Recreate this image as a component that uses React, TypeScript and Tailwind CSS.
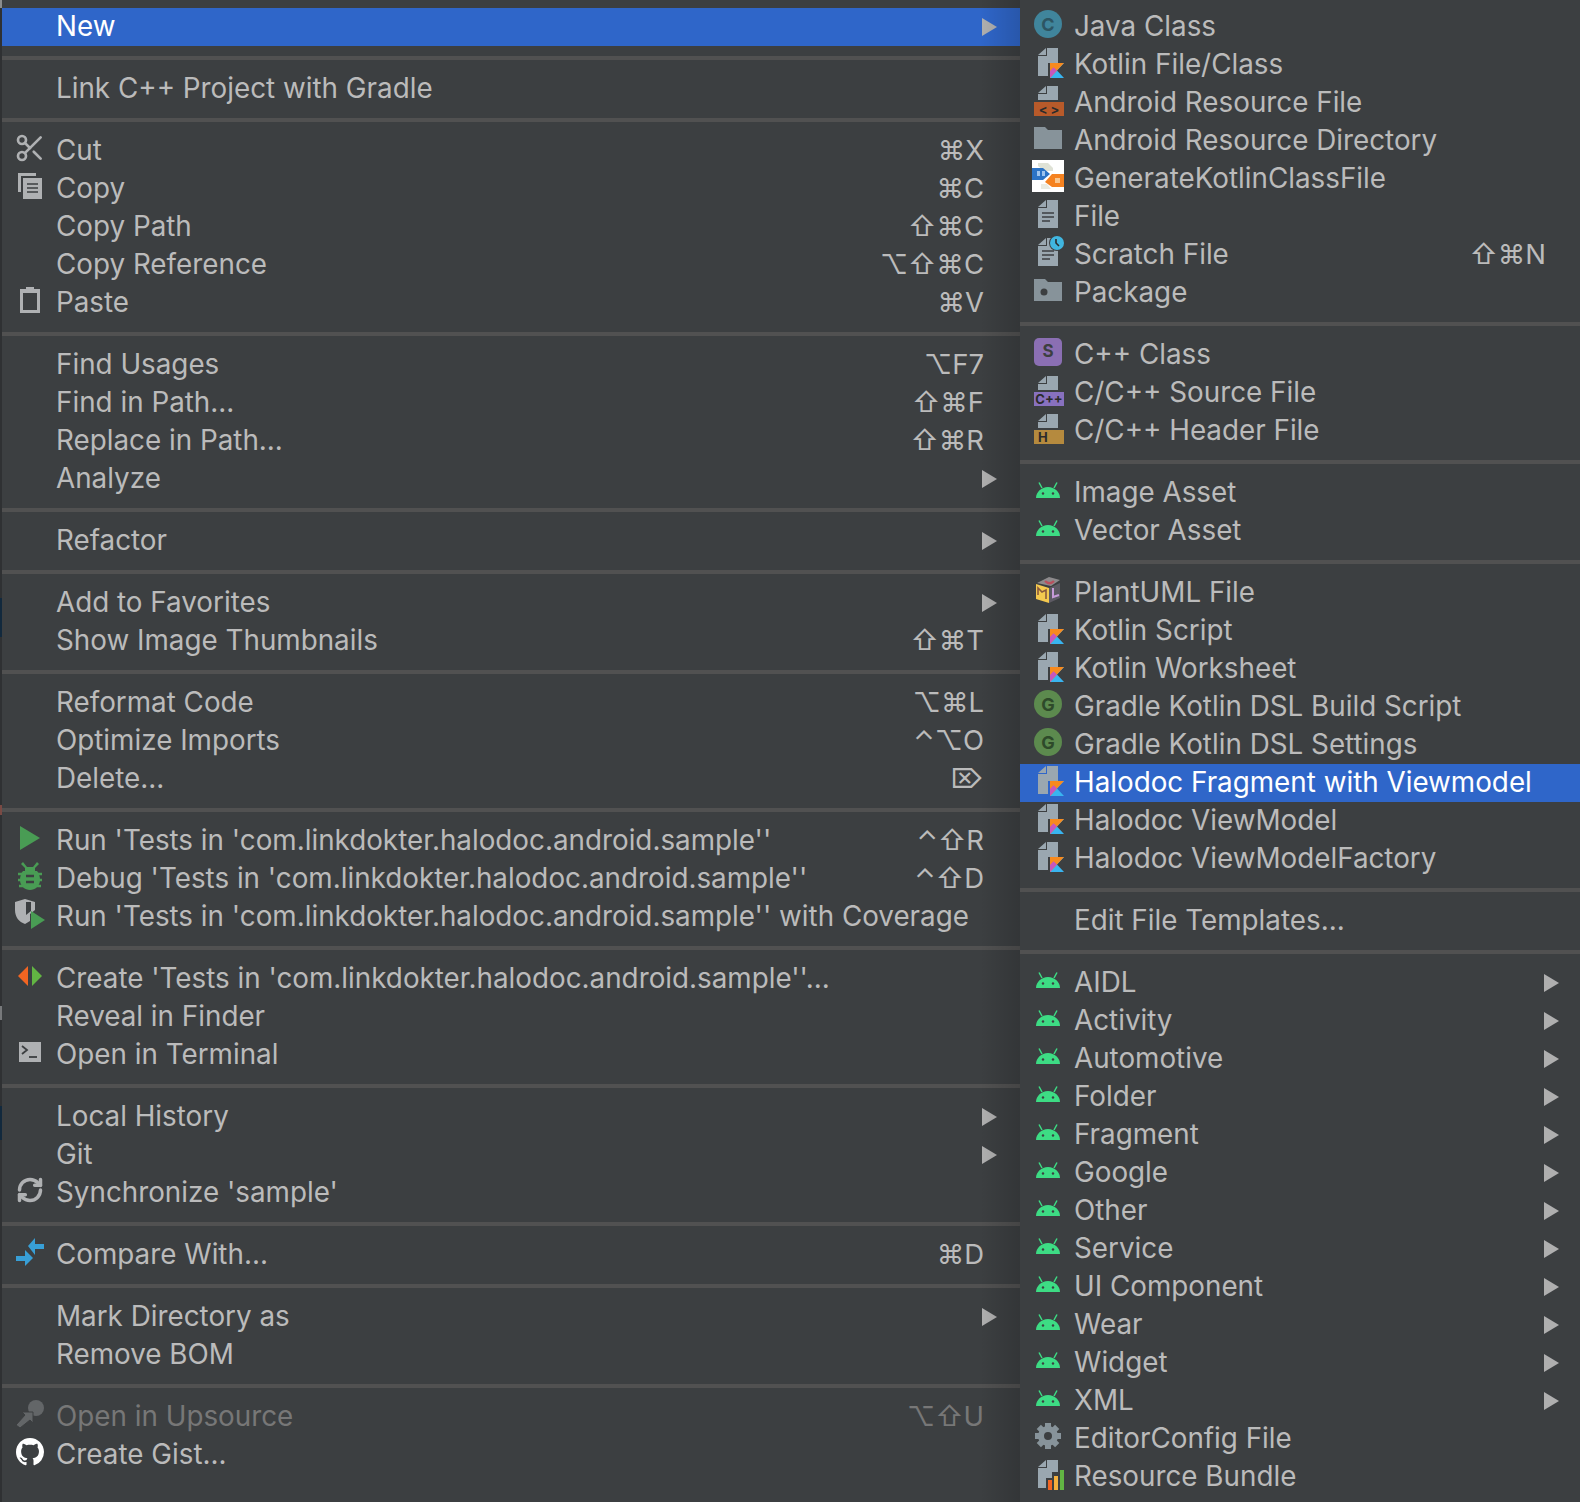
import type { ReactNode } from "react";
import { Scissors, RefreshCw } from "lucide-react";

type Item = {
  label: string;
  icon?: ReactNode;
  keys?: string;
  arrow?: boolean;
  active?: boolean;
  disabled?: boolean;
};

const BaseFile = () => (
  <path d="M6 9 14 2v7H6ZM15 2h11v8H15ZM6 10h20v20H6Z" fill="#9aa7b0" />
);

const KotlinFile = () => (
  <svg width="32" height="32" viewBox="0 0 32 32">
    <path d="M6 9 14 2v7H6ZM15 2h11v15H15ZM6 10h10v20H6Z" fill="#9aa7b0" />
    <path d="M18 17h14l-7 7.500 7 7.500H18Z" fill="#39b4f0" />
    <path d="M18 17h14l-14 15Z" fill="#f88a1e" />
    <path d="M18 32v-7l3.500-3.700 3.500 3.200-7 7.500Z" fill="#c757bc" />
  </svg>
);

const PlainFile = ({ clock }: { clock?: boolean }) => (
  <svg width="32" height="32" viewBox="0 0 32 32">
    <BaseFile />
    <path d="M10 15h12M10 19h12M10 23h8" stroke="#3c3f41" strokeWidth="1.500" />
    {clock && (
      <>
        <circle cx="25" cy="7" r="8" fill="#3c3f41" />
        <circle cx="25" cy="7" r="7" fill="#40b6e0" />
        <path d="M24 3v4l3 3" stroke="#2b2b2b" fill="none" strokeWidth="1.600" />
      </>
    )}
  </svg>
);

const Android = () => (
  <svg width="24" height="16" viewBox="0 0 24 16">
    <path d="M0 16c0-6 5.400-11 12-11s12 5 12 11Z" fill="#3ddc84" />
    <path d="M3 0.500 6 6M21 0.500 18 6" stroke="#3ddc84" strokeWidth="1.500" />
    <circle cx="7" cy="11.500" r="1.200" fill="#3c3f41" />
    <circle cx="17" cy="11.500" r="1.200" fill="#3c3f41" />
  </svg>
);

const Circle = ({ bg, fg, ch }: { bg: string; fg: string; ch: string }) => (
  <span
    className="flex h-[28px] w-[28px] items-center justify-center rounded-full text-[18px] font-bold"
    style={{ background: bg, color: fg }}
  >
    {ch}
  </span>
);

const Tagged = ({ bg, fg, ch }: { bg: string; fg: string; ch: string }) => (
  <svg width="32" height="32" viewBox="0 0 32 32">
    <path d="M6 9 14 2v7H6ZM15 2h11v14H15ZM6 10h20v6H6Z" fill="#9aa7b0" />
    <rect x="2" y="18" width="30" height="14" fill={bg} />
    <text
      x={ch === "H" ? 6 : 17}
      y="30"
      textAnchor={ch === "H" ? "start" : "middle"}
      fontSize="13"
      fontWeight="700"
      fill={fg}
      fontFamily="Inter, sans-serif"
    >
      {ch}
    </text>
  </svg>
);

const GenerateKotlin = () => (
  <svg width="32" height="32" viewBox="0 0 32 32">
    <rect width="32" height="32" fill="#fff" />
    <path d="M6 3h10l5 5v3H12L6 6Z" fill="#dfe2d6" />
    <path d="M0 8h11l7 6-7 6H0Z" fill="#2b73c6" />
    <path d="M13 22l7-8h12v13H20Z" fill="#f58220" />
    <rect x="5" y="11" width="3" height="5" fill="#9cc3ee" />
    <rect x="10" y="11" width="3" height="5" fill="#9cc3ee" />
    <rect x="23" y="18" width="5" height="5" fill="#f9c68e" />
    <path d="M9 24h6l4 5H9Z" fill="#e9ebe2" />
  </svg>
);

const Gear = () => (
  <svg width="26" height="26" viewBox="0 0 26 26" fill="#87939a">
    {[0, 45, 90, 135, 180, 225, 270, 315].map((deg) => (
      <rect key={deg} x="10" y="0" width="6" height="6" transform={`rotate(${deg} 13 13)`} />
    ))}
    <circle cx="13" cy="13" r="7" fill="none" stroke="#87939a" strokeWidth="6" />
  </svg>
);

const left: Item[][] = [
  [{ label: "New", arrow: true, active: true }],
  [{ label: "Link C++ Project with Gradle" }],
  [
    { label: "Cut", keys: "⌘X", icon: <Scissors size={32} color="#afb1b3" strokeWidth={2} /> },
    {
      label: "Copy",
      keys: "⌘C",
      icon: (
        <svg width="24" height="26" viewBox="0 0 24 26">
          <path d="M0 0h18v3H3v16H0Z" fill="#afb1b3" />
          <path d="M5 5h19v21H5Z" fill="#afb1b3" />
          <path d="M9 11h11M9 15h11M9 19h11" stroke="#3c3f41" strokeWidth="1.600" />
        </svg>
      ),
    },
    { label: "Copy Path", keys: "⇧⌘C" },
    { label: "Copy Reference", keys: "⌥⇧⌘C" },
    {
      label: "Paste",
      keys: "⌘V",
      icon: (
        <svg width="20" height="26" viewBox="0 0 20 26">
          <path d="M6 0h8v2h6v24H0V2h6Zm-3 6v17h14V6Z" fill="#afb1b3" fillRule="evenodd" />
        </svg>
      ),
    },
  ],
  [
    { label: "Find Usages", keys: "⌥F7" },
    { label: "Find in Path...", keys: "⇧⌘F" },
    { label: "Replace in Path...", keys: "⇧⌘R" },
    { label: "Analyze", arrow: true },
  ],
  [{ label: "Refactor", arrow: true }],
  [
    { label: "Add to Favorites", arrow: true },
    { label: "Show Image Thumbnails", keys: "⇧⌘T" },
  ],
  [
    { label: "Reformat Code", keys: "⌥⌘L" },
    { label: "Optimize Imports", keys: "⌃⌥O" },
    { label: "Delete...", keys: "⌦" },
  ],
  [
    {
      label: "Run 'Tests in 'com.linkdokter.halodoc.android.sample''",
      keys: "⌃⇧R",
      icon: (
        <svg width="20" height="24" viewBox="0 0 20 24">
          <path d="M0 0 20 12 0 24Z" fill="#499c54" />
        </svg>
      ),
    },
    {
      label: "Debug 'Tests in 'com.linkdokter.halodoc.android.sample''",
      keys: "⌃⇧D",
      icon: (
        <svg width="24" height="28" viewBox="0 0 24 28">
          <path d="M5 0 9 5h6l4-5 2 2-4 4v3H7V6L3 2Z" fill="#499c54" />
          <path d="M5 9h14c2 2 3 6 3 9 0 6-5 10-10 10S2 24 2 18c0-3 1-7 3-9Z" fill="#499c54" />
          <path d="M0 12h24M0 18h24M1 24h22" stroke="#499c54" strokeWidth="2.400" />
          <path d="M8 14h8M8 20h8" stroke="#3c3f41" strokeWidth="2.400" />
        </svg>
      ),
    },
    {
      label: "Run 'Tests in 'com.linkdokter.halodoc.android.sample'' with Coverage",
      icon: (
        <svg width="30" height="30" viewBox="0 0 30 30">
          <path d="M0 3 10 0l10 3v8l-5 4v7l-5 3C4 23 0 18 0 11Z" fill="#afb1b3" />
          <path d="M11 3h5v9l-5 4Z" fill="#3c3f41" />
          <path d="M16 12 30 21 16 30Z" fill="#499c54" />
        </svg>
      ),
    },
  ],
  [
    {
      label: "Create 'Tests in 'com.linkdokter.halodoc.android.sample''...",
      icon: (
        <svg width="24" height="20" viewBox="0 0 24 20">
          <path d="M10 0v20L0 10Z" fill="#f26522" />
          <path d="M14 0v20l10-10Z" fill="#62b543" />
        </svg>
      ),
    },
    { label: "Reveal in Finder" },
    {
      label: "Open in Terminal",
      icon: (
        <svg width="22" height="20" viewBox="0 0 22 20">
          <rect width="22" height="20" fill="#afb1b3" />
          <path d="M3 4l5 4-5 4" fill="none" stroke="#3c3f41" strokeWidth="1.800" />
          <path d="M10 15h8" stroke="#3c3f41" strokeWidth="1.800" />
        </svg>
      ),
    },
  ],
  [
    { label: "Local History", arrow: true },
    { label: "Git", arrow: true },
    { label: "Synchronize 'sample'", icon: <RefreshCw size={28} color="#afb1b3" strokeWidth={3} /> },
  ],
  [
    {
      label: "Compare With...",
      keys: "⌘D",
      icon: (
        <svg width="28" height="28" viewBox="0 0 28 28" fill="#389fd6">
          <path d="M0 18h9v-6l8 8-8 8v-5H0ZM28 6h-9V0l-7 8 7 9v-6h9Z" />
        </svg>
      ),
    },
  ],
  [
    { label: "Mark Directory as", arrow: true },
    { label: "Remove BOM" },
  ],
  [
    {
      label: "Open in Upsource",
      keys: "⌥⇧U",
      disabled: true,
      icon: (
        <svg width="28" height="28" viewBox="0 0 28 28" fill="#636668">
          <circle cx="20" cy="8" r="8" />
          <path d="M0 25 9 15l-3-3h11v11l-3-3-10 8Z" stroke="#3c3f41" strokeWidth="1" />
        </svg>
      ),
    },
    {
      label: "Create Gist...",
      icon: (
        <svg width="28" height="28" viewBox="0 0 16 16" fill="#fff">
          <path d="M8 0C3.580 0 0 3.580 0 8c0 3.540 2.290 6.530 5.470 7.590.4.070.55-.17.550-.38 0-.19-.01-.82-.01-1.490-2.010.37-2.530-.49-2.690-.94-.09-.23-.48-.94-.82-1.130-.28-.15-.68-.52-.01-.53.63-.01 1.080.58 1.230.82.720 1.210 1.870.87 2.330.66.070-.52.280-.87.510-1.070-1.780-.2-3.640-.89-3.640-3.950 0-.87.310-1.590.82-2.150-.08-.2-.36-1.020.08-2.120 0 0 .67-.21 2.200.82.640-.18 1.320-.27 2-.27s1.360.09 2 .27c1.530-1.040 2.200-.82 2.200-.82.440 1.100.16 1.920.08 2.120.51.560.82 1.270.82 2.150 0 3.070-1.870 3.750-3.650 3.950.29.250.54.730.54 1.480 0 1.070-.01 1.930-.01 2.200 0 .21.150.46.550.38A8.010 8.010 0 0 0 16 8c0-4.420-3.580-8-8-8Z" />
        </svg>
      ),
    },
  ],
];

const android = (label: string, arrow = true): Item => ({ label, arrow, icon: <Android /> });

const right: Item[][] = [
  [
    { label: "Java Class", icon: <Circle bg="#40859c" fg="#2d5563" ch="C" /> },
    { label: "Kotlin File/Class", icon: <KotlinFile /> },
    { label: "Android Resource File", icon: <Tagged bg="#b85a2a" fg="#2b2b2b" ch="< >" /> },
    {
      label: "Android Resource Directory",
      icon: (
        <svg width="28" height="22" viewBox="0 0 28 22">
          <path d="M0 0h11l3 3h14v19H0Z" fill="#87939a" />
        </svg>
      ),
    },
    { label: "GenerateKotlinClassFile", icon: <GenerateKotlin /> },
    { label: "File", icon: <PlainFile /> },
    { label: "Scratch File", keys: "⇧⌘N", icon: <PlainFile clock /> },
    {
      label: "Package",
      icon: (
        <svg width="28" height="22" viewBox="0 0 28 22">
          <path d="M0 0h11l3 3h14v19H0Z" fill="#87939a" />
          <circle cx="10" cy="13" r="3.500" fill="#3c3f41" />
        </svg>
      ),
    },
  ],
  [
    {
      label: "C++ Class",
      icon: (
        <span className="flex h-[28px] w-[28px] items-center justify-center rounded-[5px] bg-[#8b6fb3] text-[17px] font-bold text-[#3c3f41]">
          S
        </span>
      ),
    },
    { label: "C/C++ Source File", icon: <Tagged bg="#8871bf" fg="#2b2b2b" ch="C++" /> },
    { label: "C/C++ Header File", icon: <Tagged bg="#b58a3e" fg="#2b2b2b" ch="H" /> },
  ],
  [
    { label: "Image Asset", icon: <Android /> },
    { label: "Vector Asset", icon: <Android /> },
  ],
  [
    {
      label: "PlantUML File",
      icon: (
        <svg width="26" height="26" viewBox="0 0 26 26">
          <path d="M2 6 14 0l11 3-9 6Z" fill="#8d8a8c" />
          <path d="M10 4c3 3 6 3 9 0" fill="none" stroke="#b9505e" strokeWidth="2.400" />
          <path d="M1 7 14 11v15L1 22Z" fill="#f4c94f" />
          <path d="M14 11l11-5v15l-11 5Z" fill="#5d5a63" />
          <path d="M3 18v-7l4 4 4-2v9" fill="none" stroke="#8a5a3c" strokeWidth="1.600" />
          <path d="M18 11v9l6-2" fill="none" stroke="#c79bd8" strokeWidth="2" />
        </svg>
      ),
    },
    { label: "Kotlin Script", icon: <KotlinFile /> },
    { label: "Kotlin Worksheet", icon: <KotlinFile /> },
    { label: "Gradle Kotlin DSL Build Script", icon: <Circle bg="#5c8a4e" fg="#2e4a2a" ch="G" /> },
    { label: "Gradle Kotlin DSL Settings", icon: <Circle bg="#5c8a4e" fg="#2e4a2a" ch="G" /> },
    { label: "Halodoc Fragment with Viewmodel", icon: <KotlinFile />, active: true },
    { label: "Halodoc ViewModel", icon: <KotlinFile /> },
    { label: "Halodoc ViewModelFactory", icon: <KotlinFile /> },
  ],
  [{ label: "Edit File Templates..." }],
  [
    android("AIDL"),
    android("Activity"),
    android("Automotive"),
    android("Folder"),
    android("Fragment"),
    android("Google"),
    android("Other"),
    android("Service"),
    android("UI Component"),
    android("Wear"),
    android("Widget"),
    android("XML"),
    { label: "EditorConfig File", icon: <Gear /> },
    {
      label: "Resource Bundle",
      icon: (
        <svg width="32" height="32" viewBox="0 0 32 32">
          <BaseFile />
          <rect x="14" y="20" width="18" height="12" fill="#3c3f41" />
          <rect x="20" y="14" width="12" height="6" fill="#3c3f41" />
          <rect x="26" y="10" width="6" height="4" fill="#3c3f41" />
          <rect x="16" y="22" width="4" height="10" fill="#f26522" />
          <rect x="22" y="18" width="4" height="14" fill="#f4af3d" />
          <rect x="28" y="12" width="4" height="20" fill="#62b543" />
        </svg>
      ),
    },
  ],
];

function Row({
  item,
  iconBox,
  textLeft,
  keysRight,
  arrowRight,
}: {
  item: Item;
  iconBox: string;
  textLeft: string;
  keysRight: string;
  arrowRight: string;
}) {
  const rowClass = item.active
    ? "bg-[#2f66c9] text-white"
    : item.disabled
      ? "text-[#777777]"
      : "text-[#bbbbbb]";
  return (
    <div className={`flex h-[38px] items-center whitespace-nowrap ${rowClass}`}>
      <span className={`mb-[6px] flex shrink-0 items-center justify-center ${iconBox}`}>{item.icon}</span>
      <span className={`mb-[1px] ${textLeft}`}>{item.label}</span>
      <span className="flex-1" />
      {item.keys && <span className={`text-[27.500px] ${keysRight}`}>{item.keys}</span>}
      {item.arrow && (
        <span className={`h-0 w-0 border-y-[9px] border-l-[15px] border-y-transparent border-l-[#afafaf] ${arrowRight}`} />
      )}
    </div>
  );
}

function Column({
  groups,
  iconBox,
  textLeft,
  keysRight,
  arrowRight,
}: {
  groups: Item[][];
  iconBox: string;
  textLeft: string;
  keysRight: string;
  arrowRight: string;
}) {
  return (
    <div className="flex flex-col pt-[8px]">
      {groups.map((group, i) => (
        <div key={i} className="flex flex-col">
          {i > 0 && <div className="my-[10px] h-[4px] bg-[#515151]" />}
          {group.map((item) => (
            <Row
              key={item.label}
              item={item}
              iconBox={iconBox}
              textLeft={textLeft}
              keysRight={keysRight}
              arrowRight={arrowRight}
            />
          ))}
        </div>
      ))}
    </div>
  );
}

export default function App() {
  return (
    <div className="flex h-[1502px] w-[1580px] overflow-hidden bg-[#3c3f41] font-['Inter',sans-serif] text-[27.800px]">
      {/* window behind the menu peeks through at the very edge */}
      <div className="w-[2px] shrink-0 bg-[linear-gradient(to_bottom,#8a8c8e_0,#8a8c8e_8px,#2f3133_8px,#2f3133_598px,#12293d_598px,#12293d_637px,#2f3133_637px,#2f3133_805px,#7a4a44_805px,#7a4a44_815px,#2f3133_815px,#2f3133_1006px,#77797b_1006px,#77797b_1020px,#2f3133_1020px,#2f3133_1106px,#12293d_1106px,#12293d_1140px,#2f3133_1140px)]" />
      <div className="relative w-[1018px] shrink-0">
        <Column groups={left} iconBox="ml-[12px] w-[32px]" textLeft="ml-[10px]" keysRight="pr-[36px]" arrowRight="mr-[23px]" />
        <div className="pointer-events-none absolute inset-y-0 right-0 w-[40px] bg-gradient-to-l from-black/15 to-transparent" />
      </div>
      <div className="w-[560px] shrink-0">
        <Column groups={right} iconBox="ml-[10px] w-[36px]" textLeft="ml-[8px]" keysRight="pr-[34px]" arrowRight="mr-[21px]" />
      </div>
    </div>
  );
}
